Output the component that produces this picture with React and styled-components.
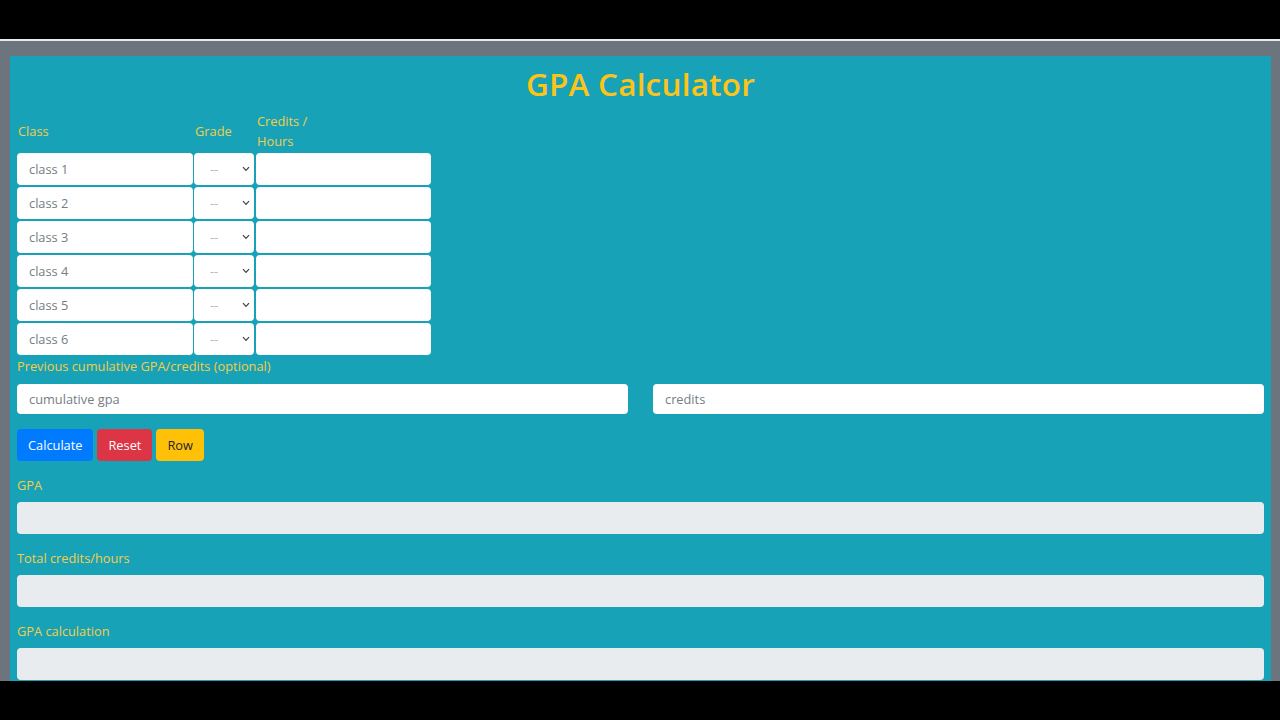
import React from "react";
import styled, { createGlobalStyle } from "styled-components";

const GlobalStyle = createGlobalStyle`
	html, body {
		margin: 0;
		padding: 0;
		background: #000;
		font-family: "Open Sans", "Noto Sans", sans-serif;
	}
	* {
		box-sizing: border-box;
	}
`;

const Screen = styled.div`
	width: 1280px;
	height: 720px;
	background: #000;
	display: flex;
	flex-direction: column;
	overflow: hidden;
`;
const TopBar = styled.div`
	height: 39px;
	flex-shrink: 0;
	border-bottom: 2px solid #e9e9e9;
	box-sizing: content-box;
`;
const Page = styled.div`
	height: 640px;
	flex-shrink: 0;
	background: #6c757d;
	padding: 15px 9px 0 10px;
	overflow: hidden;
`;
const Panel = styled.div`
	background: #17a2b8;
	padding: 0 7px 20px 7px;
	color: #f3cd48;
	font-size: 12.8px;
`;
const Title = styled.h1`
	margin: 0;
	height: 55px;
	padding-top: 7px;
	text-align: center;
	font-size: 31.5px;
	font-weight: 600;
	color: #fcc419;
	line-height: 42px;
	letter-spacing: 0.2px;
`;

const ClassGrid = styled.div`
	display: grid;
	grid-template-columns: 176px 60px 175px;
	column-gap: 1px;
	row-gap: 2px;
	& > :nth-child(3n) {
		margin-left: 1px;
	}
`;
const HeadCell = styled.div`
	height: 40px;
	display: flex;
	align-items: center;
	padding-left: 1px;
	line-height: 20px;
	width: ${(p) => p.$w || "auto"};
`;
const Field = styled.input`
	display: block;
	width: 100%;
	height: ${(p) => p.$h || 32}px;
	border: none;
	border-radius: 4px;
	background: ${(p) => (p.readOnly ? "#e9ecef" : "#fff")};
	padding: 0 12px;
	font-family: inherit;
	font-size: 12.8px;
	color: #495057;
	outline: none;
	&::placeholder {
		color: #757d85;
	}
`;
const SelectWrap = styled.div`
	position: relative;
	height: 32px;
`;
const Select = styled.select`
	appearance: none;
	width: 100%;
	height: 100%;
	border: none;
	border-radius: 4px;
	background: #fff;
	padding: 0 0 0 16px;
	font-family: inherit;
	font-size: 12.8px;
	color: #b5b9bd;
	outline: none;
`;
const Chevron = styled.svg`
	position: absolute;
	right: 4px;
	top: 13px;
	width: 8px;
	height: 6px;
	pointer-events: none;
`;

const Label = styled.div`
	line-height: 20px;
	margin: ${(p) => p.$m || "0"};
`;
const PairRow = styled.div`
	display: grid;
	grid-template-columns: 1fr 1fr;
	column-gap: 25px;
	margin-top: 8px;
`;
const Buttons = styled.div`
	display: flex;
	gap: 4px;
	margin-top: 15px;
`;
const Btn = styled.button`
	height: 32px;
	padding: 0 11px;
	border: none;
	border-radius: 4px;
	font-family: inherit;
	font-size: 12.8px;
	background: ${(p) => p.$bg};
	color: ${(p) => p.$fg || "#fff"};
`;

const classes = [1, 2, 3, 4, 5, 6];

const GradeSelect = () => (
	<SelectWrap>
		<Select defaultValue="--">
			<option>--</option>
			<option>A</option>
			<option>B</option>
			<option>C</option>
			<option>D</option>
			<option>F</option>
		</Select>
		<Chevron viewBox="0 0 8 6">
			<path d="M1 1.2 L4 4.4 L7 1.2" fill="none" stroke="#3d4348" strokeWidth="1.2" />
		</Chevron>
	</SelectWrap>
);

export default function App() {
	return (
		<Screen>
			<GlobalStyle />
			<TopBar />
			<Page>
				<Panel>
					<Title>GPA Calculator</Title>
					<ClassGrid>
						<HeadCell>Class</HeadCell>
						<HeadCell>Grade</HeadCell>
						<HeadCell $w="60px">Credits / Hours</HeadCell>
						{classes.map((n) => (
							<React.Fragment key={n}>
								<Field placeholder={"class " + n} />
								<GradeSelect />
								<Field />
							</React.Fragment>
						))}
					</ClassGrid>
					<Label $m="1px 0 0">Previous cumulative GPA/credits (optional)</Label>
					<PairRow>
						<Field $h={30} placeholder="cumulative gpa" />
						<Field $h={30} placeholder="credits" />
					</PairRow>
					<Buttons>
						<Btn $bg="#007bff">Calculate</Btn>
						<Btn $bg="#dc3545">Reset</Btn>
						<Btn $bg="#ffc107" $fg="#212529">Row</Btn>
					</Buttons>
					<Label $m="14px 0 7px">GPA</Label>
					<Field readOnly />
					<Label $m="14px 0 7px">Total credits/hours</Label>
					<Field readOnly />
					<Label $m="14px 0 7px">GPA calculation</Label>
					<Field readOnly />
				</Panel>
			</Page>
		</Screen>
	);
}
